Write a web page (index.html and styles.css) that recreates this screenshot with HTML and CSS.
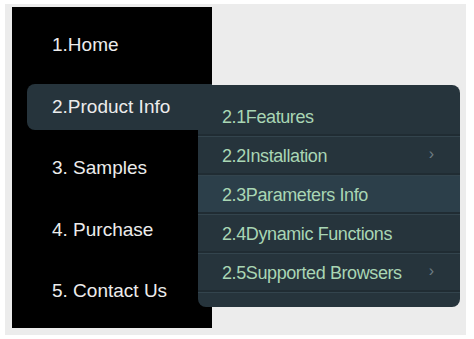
FILE: index.html
```html
<!DOCTYPE html>
<html lang="en">
<head>
    <meta charset="UTF-8">
    <meta name="viewport" content="width=device-width, initial-scale=1.0">
    <title>Menu</title>
    <link rel="stylesheet" href="styles.css">
</head>
<body>
    <div class="frame">
        <div class="nav">
            <ul class="menu">
                <li><a href="#">1.Home</a></li>
                <li class="open"><a href="#">2.Product Info</a>
                    <!-- 子菜单 -->
                    <ul class="sub">
                        <li><a href="#">2.1Features</a></li>
                        <li class="more"><a href="#">2.2Installation</a></li>
                        <li class="hover"><a href="#">2.3Parameters Info</a></li>
                        <li><a href="#">2.4Dynamic Functions</a></li>
                        <li class="more"><a href="#">2.5Supported Browsers</a></li>
                    </ul>
                </li>
                <li><a href="#">3. Samples</a></li>
                <li><a href="#">4. Purchase</a></li>
                <li><a href="#">5. Contact Us</a></li>
            </ul>
        </div>
    </div>
</body>
</html>
```

FILE: styles.css
```css
*{
    box-sizing: border-box;
}
body{
    margin: 0;
    background: #fff;
    font-family: "Liberation Sans", Arial, sans-serif;
}
.frame{
    margin: 4px 0 0 5px;
    width: 461px;
    height: 331px;
    background: #ececec;
    padding: 3px 0 0 7px;
}
.nav{
    width: 200px;
    height: 321px;
    background: #000;
    padding-top: 15px;
}
.menu{
    margin: 0;
    padding: 0;
    list-style: none;
}
.menu > li{
    position: relative;
    height: 46px;
    margin: 0 0 15.5px 15px;
    border-radius: 8px 0 0 8px;
}
.menu > li > a{
    display: block;
    line-height: 46px;
    padding-left: 25px;
    color: #ececec;
    font-size: 19px;
    text-decoration: none;
}
.menu > li.open{
    background: #26343c;
}
.sub{
    position: absolute;
    left: 171px;
    top: 1px;
    width: 262px;
    height: 222px;
    margin: 0;
    padding: 13px 0 0 0;
    list-style: none;
    background: #26343c;
    border-radius: 0 8px 8px 8px;
}
.sub li{
    position: relative;
    height: 39px;
    border-bottom: 1px solid #33444d;
    box-shadow: inset 0 -2px 0 #202c33;
}
.sub li.hover{
    background: #2c3f4a;
}
.sub li a{
    display: block;
    line-height: 38px;
    padding-left: 24px;
    color: #a9d6b4;
    font-size: 18px;
    letter-spacing: -0.4px;
    text-decoration: none;
}
.sub li.more::after{
    content: "›";
    position: absolute;
    right: 26px;
    top: 8px;
    color: #6e7c84;
    font-size: 16px;
}
```
